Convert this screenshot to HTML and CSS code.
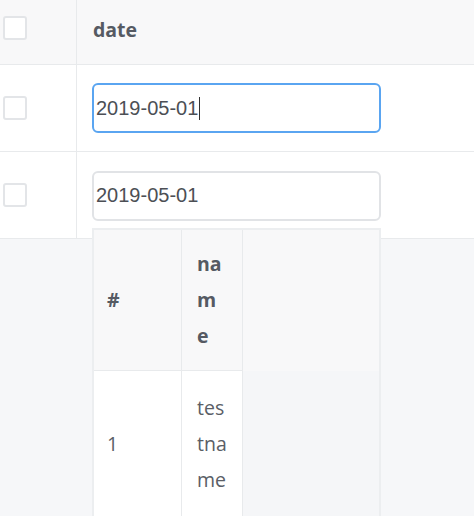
FILE: index.html
```html
<!DOCTYPE html>
<html>
<head>
<meta charset="utf-8">
<link rel="stylesheet" href="styles.css">
</head>
<body>
<div class="table">
  <div class="row head">
    <div class="cell sel"><span class="cb"></span></div>
    <div class="cell title">date</div>
  </div>
  <div class="row body-row">
    <div class="cell sel"><span class="cb"></span></div>
    <div class="cell field">
      <div class="input focus"><span class="val">2019-05-01</span><span class="caret"></span></div>
    </div>
  </div>
  <div class="row body-row">
    <div class="cell sel"><span class="cb"></span></div>
    <div class="cell field picker">
      <div class="input"><span class="val">2019-05-01</span></div>
      <div class="popup">
        <div class="ptable">
          <div class="pc ph c1">#</div>
          <div class="pc ph c2">name</div>
          <div class="pc ph c3"></div>
          <div class="pc pb c1">1</div>
          <div class="pc pb c2">testname</div>
          <div class="pc pb c3 empty3"></div>
        </div>
      </div>
    </div>
  </div>
  <div class="filler"></div>
</div>
</body>
</html>
```
FILE: styles.css
```css
html, body {
  margin: 0;
  padding: 0;
  width: 474px;
  height: 516px;
  overflow: hidden;
  background: #f6f7f9;
}
.table {
  display: flex;
  flex-direction: column;
  width: 474px;
  height: 516px;
  font-family: "Open Sans", "Liberation Sans", sans-serif;
  color: #515a6e;
}
.row {
  display: grid;
  grid-template-columns: 77px 1fr;
  border-bottom: 1px solid #e8eaec;
  background: #fff;
}
.head {
  height: 64px;
  background: #f8f8f9;
}
.body-row {
  height: 86px;
}
.cell {
  display: flex;
  align-items: center;
}
.sel {
  border-right: 1px solid #e8eaec;
  padding-left: 3px;
}
.head .cell {
  padding-bottom: 5px;
}
.head .sel {
  padding-bottom: 9px;
}
.cb {
  width: 20px;
  height: 20px;
  border: 2px solid #e3e5e8;
  border-radius: 3px;
  background: #fff;
}
.title {
  padding-left: 16px;
  font-weight: 700;
  font-size: 19.5px;
  color: #555a63;
}
.field {
  padding-left: 15px;
  position: relative;
}
.input {
  box-sizing: border-box;
  width: 289px;
  height: 50px;
  border: 2px solid #e1e3e6;
  border-radius: 6px;
  background: #fff;
  display: flex;
  align-items: center;
  padding-left: 2px;
  font-family: "Liberation Sans", Arial, sans-serif;
  font-size: 20px;
  color: #4c4f55;
}
.input.focus {
  border-color: #5aa5f1;
}
.caret {
  display: inline-block;
  width: 1px;
  height: 23px;
  background: #333;
  margin-left: 1px;
}
.picker .input {
  margin-top: 1px;
}
.popup {
  position: absolute;
  left: 15px;
  top: 76px;
  width: 289px;
  height: 288px;
  box-sizing: border-box;
  border: 2px solid #eceef0;
  border-bottom-width: 1px;
  background: #f6f7f9;
}
.ptable {
  display: grid;
  grid-template-columns: 88px 61px 1fr;
  grid-template-rows: 141px 145px;
  height: 100%;
}
.pc {
  box-sizing: border-box;
  display: flex;
  align-items: center;
  font-size: 19.5px;
  line-height: 36px;
  word-break: break-all;
}
.ph {
  background: #f8f8f9;
  font-weight: 700;
  color: #555a63;
  border-bottom: 1px solid #e8eaec;
}
.pb {
  background: #fff;
  color: #5a5e66;
}
.c1 {
  padding-left: 13px;
  border-right: 1px solid #e8eaec;
}
.c2 {
  padding-left: 15px;
  padding-right: 14px;
  border-right: 1px solid #e8eaec;
}
.ph.c2 {
  padding-right: 19px;
}
.c3 {
  background: #f8f8f9;
  border-bottom: none;
}
.empty3 {
  background: #f5f6f8;
}
.filler {
  flex: 1;
  background: #f6f7f9;
}
```
